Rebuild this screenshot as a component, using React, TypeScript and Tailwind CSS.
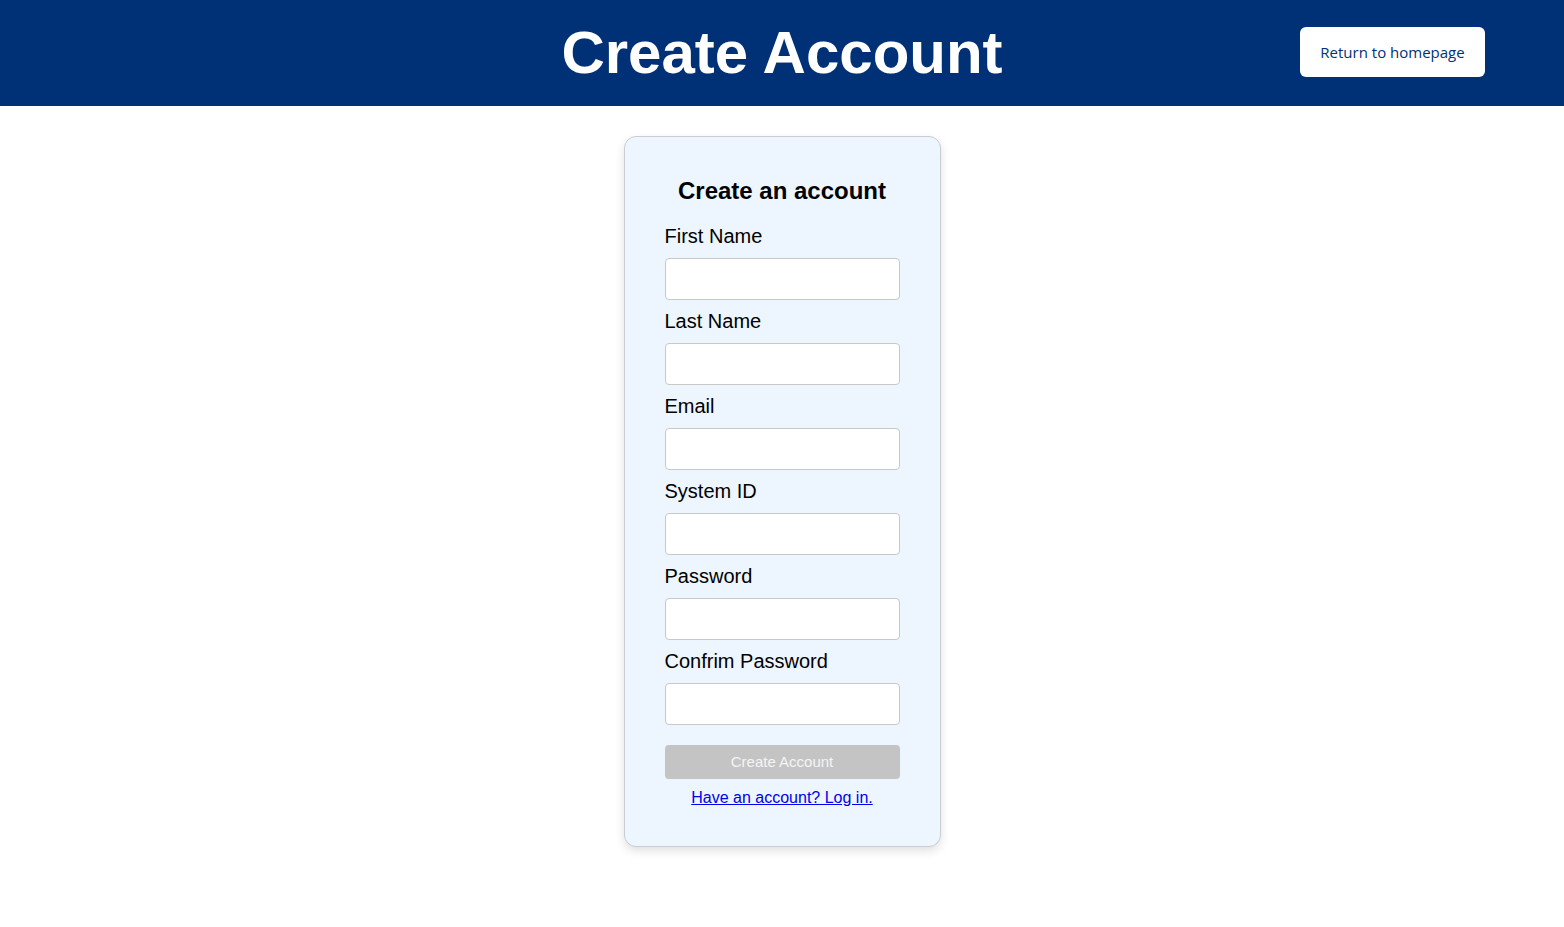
const fields = [
  "First Name",
  "Last Name",
  "Email",
  "System ID",
  "Password",
  "Confrim Password",
];

const Header = () => {
  return (
    <header className="grid h-[106px] grid-cols-[1fr_auto_1fr] items-center bg-[#003177]">
      <div />
      <h1 className="text-[60px] font-bold leading-none text-white">
        Create Account
      </h1>
      <div className="flex justify-end pr-[79px]">
        <button className="mb-[2px] flex h-[50px] w-[185px] items-center justify-center rounded-[6px] bg-white font-['Open_Sans',sans-serif] text-[15px] text-[#003177]">
          Return to homepage
        </button>
      </div>
    </header>
  );
};

const SignupCard = () => {
  return (
    <div className="w-[317px] rounded-[12px] border border-[#c9ccd1] bg-[#edf5fe] px-[40px] pt-[40px] pb-[39px] shadow-[0_4px_10px_rgba(0,0,0,0.12)]">
      <h2 className="text-center text-[24px] font-bold leading-[28px] text-black">
        Create an account
      </h2>
      <form className="mt-[20px] flex flex-col gap-[10px]">
        {fields.map((label) => (
          <label key={label} className="flex flex-col">
            <span className="mb-[10px] text-[20px] leading-[23px] text-black">
              {label}
            </span>
            <input
              type={label.includes("Password") ? "password" : "text"}
              className="h-[42px] w-full rounded-[4px] border border-[#c8c8c8] bg-white px-2 text-[16px] outline-none"
            />
          </label>
        ))}
        <button
          type="button"
          disabled
          className="mt-[10px] h-[34px] w-full rounded-[4px] bg-[#c4c4c4] text-[15px] text-[#f4f4f4]"
        >
          Create Account
        </button>
      </form>
      <div className="mt-[10px] text-center leading-[18px]">
        <a href="#" className="text-[16px] text-[#0000ee] underline">
          Have an account? Log in.
        </a>
      </div>
    </div>
  );
};

export default function App() {
  return (
    <div className="min-h-[927px] bg-white font-['Liberation_Sans',Arial,sans-serif]">
      <Header />
      <main className="flex justify-center pt-[30px]">
        <SignupCard />
      </main>
    </div>
  );
}
